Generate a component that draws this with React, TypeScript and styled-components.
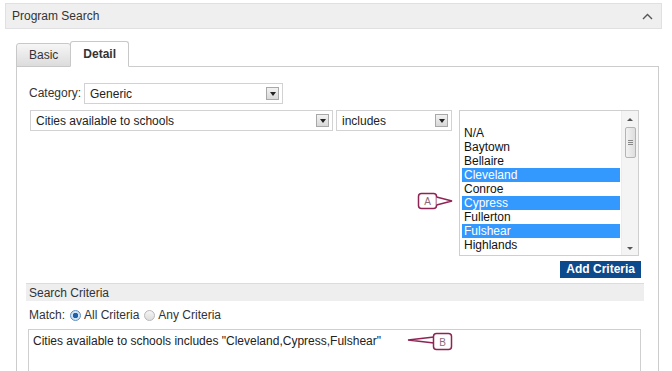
import React from 'react';
import styled, { createGlobalStyle } from 'styled-components';

const GlobalStyle = createGlobalStyle`
  html, body {
    margin: 0;
    padding: 0;
    background: #ffffff;
    font-family: "Liberation Sans", Arial, sans-serif;
    font-size: 12px;
    color: #222;
    overflow: hidden;
  }
`;

const Page = styled.div`
  position: relative;
  width: 672px;
  height: 371px;
  overflow: hidden;
  padding-top: 3px;
  box-sizing: border-box;
`;

const Header = styled.div`
  margin: 0 10px 0 5px;
  height: 26px;
  box-sizing: border-box;
  background: #efefef;
  border: 1px solid #e0e0e0;
  display: flex;
  align-items: center;
  justify-content: space-between;
  padding: 0 8px 0 6px;
  color: #333;
  font-size: 12px;
`;

const TabStrip = styled.div`
  display: flex;
  align-items: flex-end;
  margin: 12px 0 0 16px;
  height: 25px;
`;

const Tab = styled.div<{ $active?: boolean }>`
  box-sizing: border-box;
  height: ${(p) => (p.$active ? '26px' : '24px')};
  padding: 0 12px;
  display: flex;
  align-items: center;
  font-size: 12px;
  font-weight: ${(p) => (p.$active ? 'bold' : 'normal')};
  color: #333;
  border: 1px solid #c8c8c8;
  border-bottom: ${(p) => (p.$active ? '1px solid #fff' : '1px solid #c8c8c8')};
  border-radius: 3px 3px 0 0;
  background: ${(p) => (p.$active ? '#fff' : 'linear-gradient(#f6f6f6, #dcdcdc)')};
  margin-bottom: -1px;
  position: relative;
  z-index: 1;
  margin-left: ${(p) => (p.$active ? '-1px' : '0')};
`;

const Panel = styled.div`
  margin: 0 13px 0 16px;
  border: 1px solid #cccccc;
  border-bottom: none;
  height: 320px;
  box-sizing: border-box;
  padding: 16px 0 0 12px;
`;

const Row = styled.div`
  display: flex;
  align-items: flex-start;
  gap: 3px;
`;

const Label = styled.span`
  font-size: 12px;
  color: #333;
  line-height: 20px;
`;

const SelectBox = styled.div<{ $w: number }>`
  width: ${(p) => p.$w}px;
  height: 21px;
  box-sizing: border-box;
  border: 1px solid #d2d2d2;
  background: #fff;
  display: flex;
  align-items: center;
  justify-content: space-between;
  padding: 0 3px 0 5px;
  font-size: 12px;
  color: #222;
`;

const ArrowBtn = styled.div`
  width: 13px;
  height: 13px;
  box-sizing: border-box;
  border: 1px solid #a8a8a8;
  background: linear-gradient(#f2f2f2, #d8d8d8);
  display: flex;
  align-items: center;
  justify-content: center;
  &::after {
    content: '';
    border-left: 3px solid transparent;
    border-right: 3px solid transparent;
    border-top: 4px solid #222;
  }
`;

const CriteriaRow = styled.div`
  display: flex;
  gap: 3px;
  margin-top: 6px;
  margin-left: 1px;
`;

const RightCol = styled.div`
  display: flex;
  flex-direction: column;
  align-items: flex-end;
  margin-left: 4px;
`;

const ListBox = styled.div`
  width: 180px;
  height: 146px;
  box-sizing: border-box;
  border: 1px solid #cfcfcf;
  display: flex;
  background: #fff;
`;

const Options = styled.div`
  flex: 1;
  padding: 1px 1px 0 2px;
  overflow: hidden;
`;

const Option = styled.div<{ $sel?: boolean }>`
  height: 14px;
  line-height: 14px;
  font-size: 12px;
  padding-left: 2px;
  color: ${(p) => (p.$sel ? '#fff' : '#111')};
  background: ${(p) => (p.$sel ? '#3399ff' : 'transparent')};
`;

const ScrollBar = styled.div`
  width: 17px;
  background: #f4f4f4;
  border-left: 1px solid #ececec;
  display: flex;
  flex-direction: column;
  align-items: center;
  padding: 7px 0 5px;
  box-sizing: border-box;
`;

const ScrollArrow = styled.div<{ $up?: boolean }>`
  width: 0;
  height: 0;
  border-left: 3px solid transparent;
  border-right: 3px solid transparent;
  ${(p) => (p.$up ? 'border-bottom: 3px solid #555;' : 'border-top: 3px solid #555;')}
`;

const Thumb = styled.div`
  width: 11px;
  height: 31px;
  box-sizing: border-box;
  border: 1px solid #b4b4b4;
  border-radius: 2px;
  background: linear-gradient(90deg, #f2f2f2, #dedede);
  margin-top: 6px;
  margin-bottom: auto;
  display: flex;
  flex-direction: column;
  align-items: center;
  justify-content: center;
  gap: 1px;
  & > span {
    width: 5px;
    height: 1px;
    background: #888;
  }
`;

const AddButton = styled.button`
  margin-top: 5px;
  margin-right: -2px;
  height: 17px;
  padding: 0 6px;
  background: #0b4a8c;
  color: #fff;
  border: none;
  font-family: "Liberation Sans", Arial, sans-serif;
  font-weight: bold;
  font-size: 12px;
  line-height: 17px;
`;

const SectionBar = styled.div`
  margin: 5px 14px 0 -3px;
  height: 18px;
  background: #eeeeee;
  border-top: 1px solid #dcdcdc;
  box-sizing: border-box;
  display: flex;
  align-items: center;
  padding-left: 3px;
  font-size: 12px;
  color: #333;
`;

const MatchRow = styled.div`
  display: flex;
  align-items: center;
  height: 20px;
  margin-top: 4px;
  font-size: 12px;
  color: #333;
`;

const Radio = styled.span<{ $on?: boolean }>`
  width: 9px;
  height: 9px;
  border-radius: 50%;
  border: 1px solid ${(p) => (p.$on ? '#5b8cc0' : '#b8b8b8')};
  background: ${(p) =>
    p.$on ? 'radial-gradient(circle, #1f5fa6 0 2.5px, #cfe3f5 3px)' : 'linear-gradient(#f4f4f4, #dedede)'};
  margin: 0 3px 0 5px;
  display: inline-block;
`;

const TextArea = styled.div`
  margin: 4px 17px 0 -1px;
  height: 60px;
  border: 1px solid #cfcfcf;
  padding: 4px 4px;
  font-size: 12px;
  color: #222;
`;

const Callout = styled.svg`
  position: absolute;
  overflow: visible;
`;

const cities = [
  { name: '', sel: false },
  { name: 'N/A', sel: false },
  { name: 'Baytown', sel: false },
  { name: 'Bellaire', sel: false },
  { name: 'Cleveland', sel: true },
  { name: 'Conroe', sel: false },
  { name: 'Cypress', sel: true },
  { name: 'Fullerton', sel: false },
  { name: 'Fulshear', sel: true },
  { name: 'Highlands', sel: false },
];

function Select({ w, value }: { w: number; value: string }) {
  return (
    <SelectBox $w={w}>
      <span>{value}</span>
      <ArrowBtn />
    </SelectBox>
  );
}

export default function App() {
  return (
    <Page>
      <GlobalStyle />
      <Header>
        <span>Program Search</span>
        <svg width="11" height="7" viewBox="0 0 11 7">
          <path d="M1 6 L5.5 1.5 L10 6" fill="none" stroke="#555" strokeWidth="1.4" />
        </svg>
      </Header>
      <TabStrip>
        <Tab>Basic</Tab>
        <Tab $active>Detail</Tab>
      </TabStrip>
      <Panel>
        <Row>
          <Label>Category:</Label>
          <Select w={199} value="Generic" />
        </Row>
        <CriteriaRow>
          <Select w={303} value="Cities available to schools" />
          <Select w={116} value="includes" />
          <RightCol>
            <ListBox>
              <Options>
                {cities.map((c, i) => (
                  <Option key={i} $sel={c.sel}>
                    {c.name}
                  </Option>
                ))}
              </Options>
              <ScrollBar>
                <ScrollArrow $up />
                <Thumb>
                  <span />
                  <span />
                  <span />
                </Thumb>
                <ScrollArrow />
              </ScrollBar>
            </ListBox>
            <AddButton>Add Criteria</AddButton>
          </RightCol>
        </CriteriaRow>
        <SectionBar>Search Criteria</SectionBar>
        <MatchRow>
          Match:
          <Radio $on />
          All Criteria
          <Radio />
          Any Criteria
        </MatchRow>
        <TextArea>Cities available to schools includes "Cleveland,Cypress,Fulshear"</TextArea>
      </Panel>

      <Callout style={{ left: 416, top: 191 }} width="40" height="20" viewBox="0 0 40 20">
        <rect x="2.5" y="2.5" width="18" height="15" rx="3" fill="#fff" stroke="#8e2453" strokeWidth="1.5" />
        <path d="M20.5 6 L36 10 L20.5 14" fill="#fff" stroke="#8e2453" strokeWidth="1.5" />
        <text x="11.5" y="14" fontSize="10" textAnchor="middle" fill="#8a6a78" fontFamily="Liberation Sans, Arial, sans-serif">A</text>
      </Callout>
      <Callout style={{ left: 406, top: 331 }} width="50" height="22" viewBox="0 0 50 22">
        <path d="M28 6 L2 9 L28 12" fill="#fff" stroke="#8e2453" strokeWidth="1.5" />
        <rect x="27.5" y="2.5" width="18" height="16" rx="3" fill="#fff" stroke="#8e2453" strokeWidth="1.5" />
        <text x="36.5" y="14.5" fontSize="10" textAnchor="middle" fill="#8a6a78" fontFamily="Liberation Sans, Arial, sans-serif">B</text>
      </Callout>
    </Page>
  );
}
